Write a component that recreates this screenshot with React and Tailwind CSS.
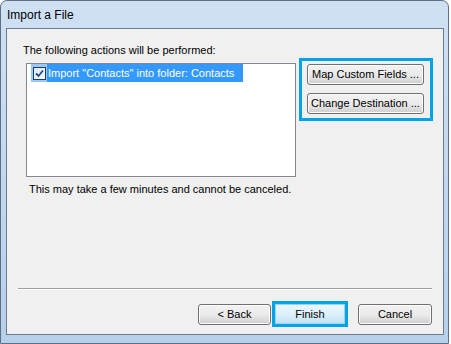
import React from 'react';

const font = { fontFamily: '"Liberation Sans", Arial, sans-serif' };

const WinButton = ({ children, className = '' }) => (
  <button
    className={`h-[21px] rounded-[3px] border border-[#707070] bg-gradient-to-b from-[#f2f2f2] via-[#ebebeb] to-[#cfcfcf] text-[11px] leading-none text-black whitespace-nowrap shadow-[inset_0_0_0_1px_#fcfcfc] ${className}`}
  >
    {children}
  </button>
);

const Checkbox = () => (
  <div className="w-[13px] h-[13px] border border-[#1c3e6e] bg-gradient-to-br from-[#dce8f5] to-[#f7fbff] flex items-center justify-center">
    <svg width="9" height="9" viewBox="0 0 9 9">
      <path d="M1 4.5 L3.5 7 L8 1.5" fill="none" stroke="#1f4c8a" strokeWidth="1.8" />
    </svg>
  </div>
);

export default function App() {
  return (
    <div className="w-[451px] h-[344px] bg-white" style={font}>
      <div className="w-[449px] h-[344px] rounded-t-[7px] border border-[#5c6f84] bg-gradient-to-b from-[#cfe0f3] via-[#c3d8ee] to-[#b7cfe9] px-[5px] flex flex-col">
        {/* Title bar */}
        <div className="h-[27px] flex items-center pl-[1px] text-[12px] text-black">Import a File</div>

        {/* Client area */}
        <div className="w-[438px] h-[307px] border border-[#6d7d8f] bg-[#f0f0f0] flex flex-col text-[11px] text-black">
          <div className="pl-[16px] pt-[14px] leading-[15px]">The following actions will be performed:</div>

          <div className="flex items-start">
            {/* List */}
            <div className="ml-[19px] mt-[5px] w-[270px] h-[114px] border border-[#828790] bg-white">
              <div className="ml-[4px] flex h-[18px] w-[212px]">
                <div className="w-[16px] bg-[#99c9f7] flex items-center justify-center">
                  <Checkbox />
                </div>
                <div className="flex-1 bg-[#3399ff] text-white flex items-center pl-[1px] whitespace-nowrap">
                  Import "Contacts" into folder: Contacts
                </div>
              </div>
            </div>

            {/* Highlighted buttons */}
            <div className="ml-[3px] w-[134px] h-[63px] border-[3px] border-[#00a2e8] pl-[5px] pt-[3px] flex flex-col gap-[8px]">
              <WinButton className="w-[117px] text-left pl-[4px]">Map Custom Fields ...</WinButton>
              <WinButton className="w-[117px] text-left pl-[3px]">Change Destination ...</WinButton>
            </div>
          </div>

          <div className="pl-[22px] mt-[5px] leading-[15px]">This may take a few minutes and cannot be canceled.</div>

          <div className="flex-1" />

          <div className="mx-[11px] h-[2px] border-t border-[#a0a0a0] border-b border-b-white" />

          <div className="mt-[11px] mb-[7px] pr-[11px] flex justify-end items-center">
            <WinButton className="w-[73px]">&lt; Back</WinButton>
            <div className="ml-[1px] w-[76px] h-[26px] border-[3px] border-[#00a2e8]">
              <button className="w-full h-full border border-[#9fd0f0] bg-gradient-to-b from-[#eaf6fd] via-[#dcf0fb] to-[#c4e3f6] text-[11px] leading-none text-black">
                Finish
              </button>
            </div>
            <WinButton className="ml-[10px] w-[74px]">Cancel</WinButton>
          </div>
        </div>
      </div>
    </div>
  );
}
